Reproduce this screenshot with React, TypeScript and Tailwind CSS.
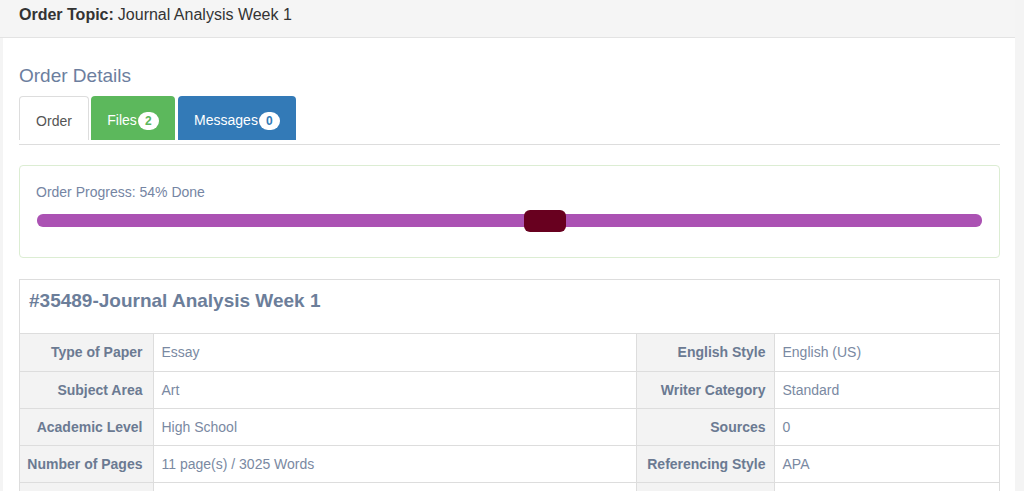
const rows = [
  ["Type of Paper", "Essay", "English Style", "English (US)"],
  ["Subject Area", "Art", "Writer Category", "Standard"],
  ["Academic Level", "High School", "Sources", "0"],
  ["Number of Pages", "11 page(s) / 3025 Words", "Referencing Style", "APA"],
  ["", "", "", ""],
];

export default function App() {
  return (
    <div className="h-[491px] overflow-hidden bg-[#f4f4f4] font-['Liberation_Sans',Arial,sans-serif]">
      <div className="ml-[3px] w-[1012px] bg-white min-h-[491px]">
        {/* header */}
        <div className="h-[38px] bg-[#f5f5f5] border-b border-[#e3e3e3] -ml-[3px] pl-[19px] pt-[6px] text-[16px] leading-[18px] text-[#333]">
          <span className="font-bold">Order Topic:</span>
          <span className="ml-1">Journal Analysis Week 1</span>
        </div>

        <div className="pl-[16px] pr-[15px]">
          <h3 className="mt-[25px] text-[19px] leading-[26px] text-[#6c7e9e]">Order Details</h3>

          {/* tabs */}
          <div className="mt-[7px] border-b border-[#ddd] pb-[4px]">
            <div className="flex items-end h-[44px] text-[14px]">
              <div className="w-[70px] h-[44px] pt-[5px] flex items-center justify-center bg-white border border-[#ddd] border-b-0 rounded-t-[4px] text-[#555]">
                Order
              </div>
              <div className="ml-[2px] w-[84px] h-[44px] pt-[5px] flex items-center justify-center bg-[#5cb85c] rounded-t-[4px] text-white">
                Files
                <span className="ml-[1px] h-[18px] min-w-[21px] px-[6px] rounded-full bg-white text-[#5cb85c] text-[12px] font-bold flex items-center justify-center">2</span>
              </div>
              <div className="ml-[3px] w-[118px] h-[44px] pt-[5px] flex items-center justify-center bg-[#337ab7] rounded-t-[4px] text-white">
                Messages
                <span className="ml-[1px] h-[18px] min-w-[21px] px-[6px] rounded-full bg-white text-[#337ab7] text-[12px] font-bold flex items-center justify-center">0</span>
              </div>
            </div>
          </div>

          {/* progress */}
          <div className="mt-[20px] h-[93px] border border-[#dcedd3] rounded-[4px] px-[16px] pt-[18px]">
            <div className="text-[14px] text-[#7585a3] leading-[16px]">Order Progress: 54% Done</div>
            <div className="relative mt-[14px] ml-[1px] mr-[1px] h-[13px] rounded-[6px] bg-[#ab52b3]">
              <div className="absolute left-[487px] -top-[4px] w-[42px] h-[22px] rounded-[6px] bg-[#68001f]" />
            </div>
          </div>

          {/* details card */}
          <div className="mt-[21px] border border-[#ddd] border-b-0">
            <div className="h-[53px] pt-[9px] pl-[9px] text-[19px] leading-[24px] font-bold text-[#6c7e9a]">
              #35489-Journal Analysis Week 1
            </div>
            <table className="w-full border-collapse text-[14px]">
              <tbody>
                {rows.map((r, i) => (
                  <tr key={i} className={i === 0 ? "h-[38px]" : "h-[37px]"}>
                    <td className="w-[133px] bg-[#f3f3f3] border-t border-r border-[#ddd] text-right pr-[10px] font-bold text-[#6b7a92]">{r[0]}</td>
                    <td className="w-[483px] border-t border-r border-[#ddd] pl-[8px] text-[#7a89a2]">{r[1]}</td>
                    <td className="w-[138px] bg-[#f3f3f3] border-t border-r border-[#ddd] text-right pr-[8px] font-bold text-[#6b7a92]">{r[2]}</td>
                    <td className="border-t border-[#ddd] pl-[8px] text-[#7a89a2]">{r[3]}</td>
                  </tr>
                ))}
              </tbody>
            </table>
          </div>
        </div>
      </div>
    </div>
  );
}
